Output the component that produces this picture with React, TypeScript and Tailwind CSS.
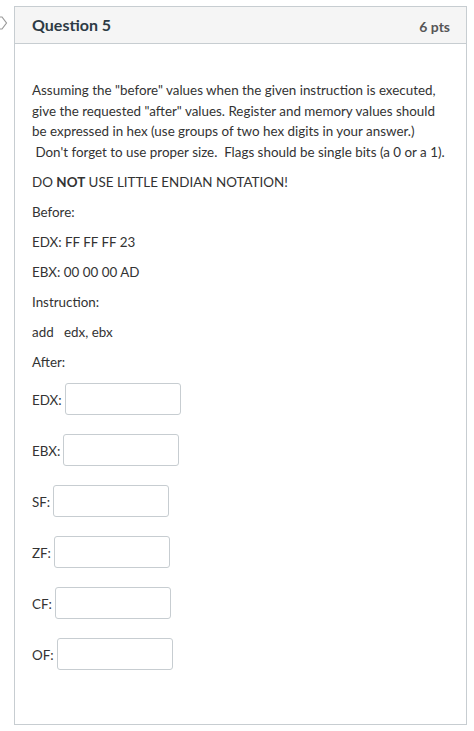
import React from "react";

const rows = [
  { label: "EDX:" },
  { label: "EBX:" },
  { label: "SF:" },
  { label: "ZF:" },
  { label: "CF:" },
  { label: "OF:" },
];

export default function App() {
  return (
    <div
      className="relative w-[474px] h-[731px] bg-white overflow-hidden text-[#2d3b45]"
      style={{ fontFamily: "Lato, 'Open Sans', sans-serif" }}
    >
      <svg className="absolute left-0 top-[16px]" width="8" height="14" viewBox="0 0 8 14">
        <path d="M-4 1 L2 1 L6.5 7 L2 13 L-4 13" fill="none" stroke="#9a9a9a" strokeWidth="1.2" />
      </svg>
      <div className="absolute left-[14px] top-[6px] w-[453px] h-[719px] border border-[#c7cdd1] flex flex-col">
        <div className="h-[37px] bg-[#f5f5f5] border-b border-[#c7cdd1] flex items-center justify-between pl-[17px] pr-[16px]">
          <span className="text-[16px] font-bold text-[#2d3b45]">Question 5</span>
          <span className="text-[14px] font-bold text-[#555] pt-[2px]">6 pts</span>
        </div>
        <div className="pl-[17px] pr-[15px] pt-[36px] text-[13.4px] leading-[20.7px] text-[#333]">
          <p className="mb-[9.3px] whitespace-nowrap">
            Assuming the "before" values when the given instruction is executed,
            <br />
            give the requested "after" values. Register and memory values should
            <br />
            be expressed in hex (use groups of two hex digits in your answer.)
            <br />
            {"\u00a0Don't forget to use proper size.\u00a0 Flags should be single bits (a 0 or a 1)."}
          </p>
          <p className="mb-[9.3px]">
            DO <strong className="font-bold">NOT</strong> USE LITTLE ENDIAN NOTATION!
          </p>
          <p className="mb-[9.3px]">Before:</p>
          <p className="mb-[9.3px]">EDX: FF FF FF 23</p>
          <p className="mb-[9.3px]">EBX: 00 00 00 AD</p>
          <p className="mb-[9.3px]">Instruction:</p>
          <p className="mb-[9.3px] whitespace-pre">add   edx, ebx</p>
          <p className="mb-[10px]">After:</p>
          <div className="flex flex-col gap-[19px]">
            {rows.map((r) => (
              <div key={r.label} className="flex items-center h-[32px]">
                <span className="pt-[4px] mr-[3px]">{r.label}</span>
                <div className="w-[116px] h-[32px] border border-[#c7cdd1] rounded-[3px] bg-white" />
              </div>
            ))}
          </div>
        </div>
      </div>
    </div>
  );
}
